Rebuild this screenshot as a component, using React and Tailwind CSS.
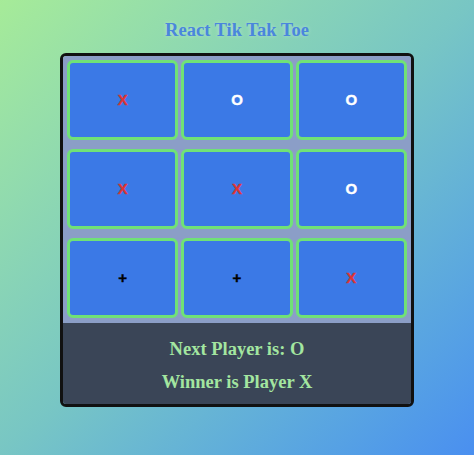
export default function App() {
  const cells = ["X", "O", "O", "X", "X", "O", "+", "+", "X"];
  const colorFor = (v) =>
    v === "X" ? "text-[#dc3535]" : v === "O" ? "text-white" : "text-black";

  return (
    <div className="w-[474px] h-[455px] bg-gradient-to-br from-[#a6eb98] via-[#78c6c4] to-[#4a8ff0] flex flex-col items-center">
      <h1 className="mt-[19px] text-[18.5px] leading-[22px] font-bold text-[#4a86dd] font-['Liberation_Serif',serif] [text-shadow:0_0_4px_rgba(255,255,255,0.35)]">
        React Tik Tak Toe
      </h1>
      <div className="mt-[12px] w-[354px] border-[3px] border-[#111] rounded-[6px] overflow-hidden">
        <div className="bg-[#8b9ec7] px-[4px] pt-[4px] pb-[5px] grid grid-cols-3 gap-x-[3px] gap-y-[9px]">
          {cells.map((v, i) => (
            <div
              key={i}
              className="h-[80px] bg-[#3b79e6] border-[3px] border-[#70e276] rounded-[6px] flex items-center justify-center"
            >
              <span
                className={`text-[15px] font-bold font-['Liberation_Sans',sans-serif] [-webkit-text-stroke:0.4px_currentColor] ${colorFor(v)}`}
              >
                {v}
              </span>
            </div>
          ))}
        </div>
        <div className="bg-[#3a4557] h-[81px] flex flex-col items-center pt-[15px] gap-[11px] font-['Liberation_Serif',serif] font-bold text-[18.5px] leading-[22px] text-[#a3e6a0]">
          <div>Next Player is: O</div>
          <div>Winner is Player X</div>
        </div>
      </div>
    </div>
  );
}
